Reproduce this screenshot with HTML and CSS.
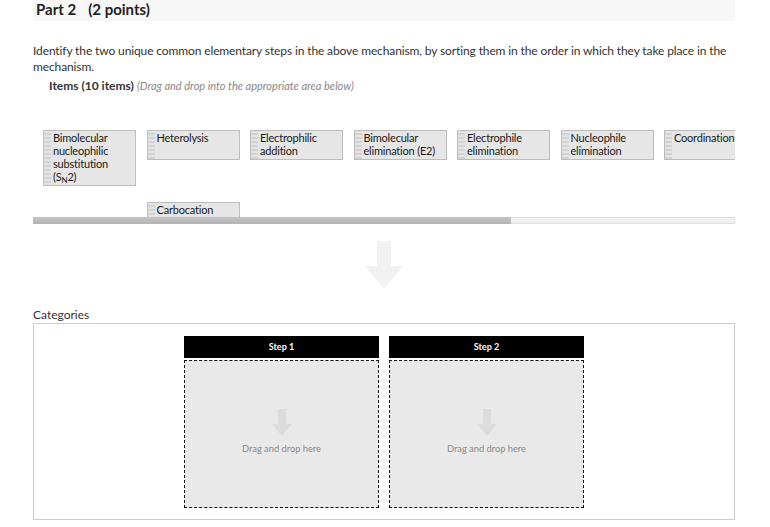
FILE: index.html
```html
<!DOCTYPE html>
<html>
<head>
<meta charset="utf-8">
<link rel="stylesheet" href="styles.css">
</head>
<body>
<div class="page">
  <div class="part-header"><span class="part">Part 2</span><span class="pts">(2 points)</span></div>
  <p class="prompt">Identify the two unique common elementary steps in the above mechanism, by sorting them in the order in which they take place in the mechanism.</p>
  <div class="items-label"><b>Items (10 items)</b> <i>(Drag and drop into the appropriate area below)</i></div>
  <div class="items-viewport">
    <div class="items-grid">
      <div class="item"><span class="grip"></span><span class="txt">Bimolecular nucleophilic substitution (S<span class="sub">N</span>2)</span></div>
      <div class="item"><span class="grip"></span><span class="txt">Heterolysis</span></div>
      <div class="item"><span class="grip"></span><span class="txt">Electrophilic addition</span></div>
      <div class="item"><span class="grip"></span><span class="txt">Bimolecular elimination (E2)</span></div>
      <div class="item"><span class="grip"></span><span class="txt">Electrophile elimination</span></div>
      <div class="item"><span class="grip"></span><span class="txt">Nucleophile elimination</span></div>
      <div class="item"><span class="grip"></span><span class="txt">Coordination</span></div>
      <div class="item"><span class="grip"></span><span class="txt">Proton transfer</span></div>
      <div class="item"><span class="grip"></span><span class="txt">Carbocation rearrangement</span></div>
      <div class="item row2"><span class="grip"></span><span class="txt">Carbocation</span></div>
    </div>
  </div>
  <div class="scrollbar"><div class="thumb"></div></div>
  <div class="big-arrow">
    <svg width="38" height="48" viewBox="0 0 38 48"><path d="M12 0 H26 V25 H38 L19 48 L0 25 H12 Z" fill="#f2f2f2"/></svg>
  </div>
  <div class="cat-label">Categories</div>
  <div class="cat-box">
    <div class="cat">
      <div class="cat-head">Step 1</div>
      <div class="drop">
        <svg class="drop-arrow" width="20" height="27" viewBox="0 0 20 27"><path d="M6 0 H14 V15 H20 L10 27 L0 15 H6 Z" fill="#dcdcdc"/></svg>
        <div class="drop-text">Drag and drop here</div>
      </div>
    </div>
    <div class="cat">
      <div class="cat-head">Step 2</div>
      <div class="drop">
        <svg class="drop-arrow" width="20" height="27" viewBox="0 0 20 27"><path d="M6 0 H14 V15 H20 L10 27 L0 15 H6 Z" fill="#dcdcdc"/></svg>
        <div class="drop-text">Drag and drop here</div>
      </div>
    </div>
  </div>
</div>
</body>
</html>
```
FILE: styles.css
```css
html, body {
  margin: 0;
  padding: 0;
  background: #fff;
}
body {
  font-family: Lato, "Open Sans", sans-serif;
  color: #333;
}
.page {
  width: 702px;
  margin-left: 33px;
}
.part-header {
  background: #f7f7f7;
  height: 21px;
  padding-left: 3px;
  font-size: 15px;
  font-weight: bold;
  line-height: 18px;
  color: #222;
}
.pts {
  margin-left: 12px;
}
.prompt {
  margin: 22px 0 0 0;
  font-size: 12px;
  line-height: 16px;
  letter-spacing: -0.12px;
  color: #333;
}
.items-label {
  margin-top: 3px;
  margin-left: 16px;
  font-size: 12px;
  line-height: 16px;
}
.items-label b {
  color: #333;
}
.items-label i {
  color: #888;
  font-size: 11px;
}
.items-viewport {
  margin-top: 36px;
  height: 87px;
  overflow: hidden;
  padding-left: 10px;
}
.items-grid {
  display: grid;
  grid-template-columns: repeat(10, 93px);
  column-gap: 10.5px;
  row-gap: 16px;
  align-items: start;
}
.item {
  display: flex;
  box-sizing: border-box;
  min-height: 30px;
  background: #e6e6e6;
  border: 1px solid #bdbdbd;
  font-size: 11px;
  line-height: 13px;
  letter-spacing: -0.2px;
  color: #1a1a1a;
}
.item.row2 {
  grid-column: 2;
  grid-row: 2;
}
.grip {
  flex: 0 0 7px;
  background-color: #d6d6d6;
  background-image: repeating-linear-gradient(to bottom, #e4e4e4 0 2px, #d2d2d2 2px 4px);
}
.txt {
  padding: 0 2px 0 2px;
}
.sub {
  font-size: 8px;
  position: relative;
  top: 2px;
}
.scrollbar {
  height: 7px;
  box-sizing: border-box;
  background: #f1f1f1;
  border: 1px solid #e0e0e0;
}
.thumb {
  width: 478px;
  height: 7px;
  margin: -1px 0 0 -1px;
  background: linear-gradient(#c4c4c4, #b4b4b4);
}
.big-arrow {
  display: flex;
  justify-content: center;
  padding-top: 17px;
  height: 48px;
}
.cat-label {
  margin-top: 18px;
  font-size: 12px;
  line-height: 16px;
  color: #333;
}
.cat-box {
  margin-top: 0;
  border: 1px solid #ccc;
  height: 197px;
  box-sizing: border-box;
  display: flex;
  justify-content: center;
  gap: 10px;
  padding-top: 12px;
}
.cat {
  width: 195px;
  display: flex;
  flex-direction: column;
}
.cat-head {
  background: #000;
  color: #fff;
  height: 22px;
  font-size: 9px;
  font-weight: bold;
  line-height: 22px;
  text-align: center;
}
.drop {
  margin-top: 2px;
  height: 148px;
  box-sizing: border-box;
  border: 1px dashed #111;
  background: #e9e9e9;
  display: flex;
  flex-direction: column;
  align-items: center;
  padding-top: 48px;
}
.drop-text {
  margin-top: 7px;
  font-size: 9.3px;
  color: #888;
}
```
